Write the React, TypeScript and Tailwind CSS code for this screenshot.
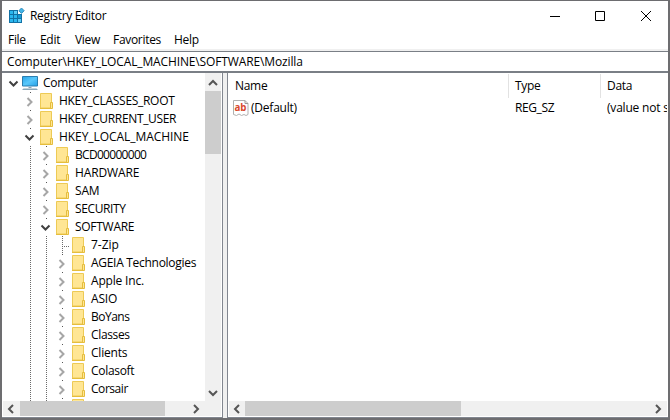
import { useState } from 'react';
import clsx from 'clsx';

type TreeNode = {
  name: string;
  level: number;
  state: 'open' | 'closed' | 'leaf';
  track: string;
};

const NODES: TreeNode[] = [
  { name: 'Computer', level: 0, state: 'open', track: 'tracking-[-0.3px]' },
  { name: 'HKEY_CLASSES_ROOT', level: 1, state: 'closed', track: 'tracking-[-0.3px]' },
  { name: 'HKEY_CURRENT_USER', level: 1, state: 'closed', track: 'tracking-[-0.34px]' },
  { name: 'HKEY_LOCAL_MACHINE', level: 1, state: 'open', track: 'tracking-[-0.06px]' },
  { name: 'BCD00000000', level: 2, state: 'closed', track: 'tracking-[-0.7px]' },
  { name: 'HARDWARE', level: 2, state: 'closed', track: 'tracking-[-0.14px]' },
  { name: 'SAM', level: 2, state: 'closed', track: 'tracking-[-0.2px]' },
  { name: 'SECURITY', level: 2, state: 'closed', track: 'tracking-[-0.37px]' },
  { name: 'SOFTWARE', level: 2, state: 'open', track: 'tracking-[-0.28px]' },
  { name: '7-Zip', level: 3, state: 'leaf', track: 'tracking-[0px]' },
  { name: 'AGEIA Technologies', level: 3, state: 'closed', track: 'tracking-[-0.29px]' },
  { name: 'Apple Inc.', level: 3, state: 'closed', track: 'tracking-[-0.18px]' },
  { name: 'ASIO', level: 3, state: 'closed', track: 'tracking-[-0.2px]' },
  { name: 'BoYans', level: 3, state: 'closed', track: 'tracking-[-0.5px]' },
  { name: 'Classes', level: 3, state: 'closed', track: 'tracking-[-0.35px]' },
  { name: 'Clients', level: 3, state: 'closed', track: 'tracking-[-0.2px]' },
  { name: 'Colasoft', level: 3, state: 'closed', track: 'tracking-[-0.3px]' },
  { name: 'Corsair', level: 3, state: 'closed', track: 'tracking-[-0.45px]' },
  { name: '', level: 3, state: 'closed', track: '' },
];

const MENU = [
  { label: 'File', width: 'w-8' },
  { label: 'Edit', width: 'w-[35px]' },
  { label: 'View', width: 'w-[38px]' },
  { label: 'Favorites', width: 'w-[61px]' },
  { label: 'Help', width: 'w-8' },
];

const ARROWS = {
  up: 'M4 10l4-4 4 4',
  down: 'M4 6l4 4 4-4',
  left: 'M10 4l-4 4 4 4',
  right: 'M6 4l4 4-4 4',
};

function ScrollArrow({ dir }: { dir: keyof typeof ARROWS }) {
  return (
    <svg width="16" height="16" viewBox="0 0 16 16" className="shrink-0" fill="none" stroke="#555" strokeWidth="2">
      <path d={ARROWS[dir]} />
    </svg>
  );
}

function Guide() {
  return (
    <svg width="16" height="18" className="shrink-0" shapeRendering="crispEdges">
      <path d="M8.5 0v18" stroke="#6b6b6b" strokeDasharray="1 1" />
    </svg>
  );
}

function Expander({ state, level, onClick }: { state: TreeNode['state']; level: number; onClick: () => void }) {
  return (
    <svg width="16" height="18" className="shrink-0" fill="none" onClick={onClick}>
      {state === 'leaf' ? (
        <path d="M8.5 0v18M8 10.5h8" stroke="#6b6b6b" strokeDasharray="1 1" shapeRendering="crispEdges" />
      ) : (
        level > 0 && <path d="M8 0h1v1h-1z" fill="#555" />
      )}
      {state === 'open' && <path d="M3.5 7.5l4 4 4-4" stroke="#404040" strokeWidth="2" />}
      {state === 'closed' && <path d="M5.5 6l4 4-4 4" stroke="#a6a6a6" strokeWidth="2" />}
    </svg>
  );
}

function FolderIcon() {
  return (
    <svg width="13" height="16" viewBox="0 0 13 16" className="shrink-0">
      <path d="M.5.5h11v14.5H.5z" fill="#ffe694" stroke="#edca55" />
      <path d="M10.5 9.5h2v6h-2z" fill="#ffe694" stroke="#e5bd3d" />
      <path d="M0 15.5h11" stroke="#e5bd3d" />
    </svg>
  );
}

function ComputerIcon() {
  return (
    <svg width="17" height="16" viewBox="0 0 17 16" className="shrink-0">
      <defs>
        <linearGradient id="screen" x1="0" y1="0" x2="1" y2="1">
          <stop offset="0" stopColor="#27a3e8" />
          <stop offset=".5" stopColor="#59c8fb" />
          <stop offset="1" stopColor="#25a0e6" />
        </linearGradient>
      </defs>
      <path d="M.5 1.5h15v9.5H.5z" fill="url(#screen)" stroke="#2b7eb0" />
      <path d="M6.5 12h3v1h-3z" fill="#8ca4b2" />
      <path d="M1.5 13.5h13l1.500 1.500H0z" fill="#8ba7b8" />
    </svg>
  );
}

function RegeditIcon() {
  return (
    <svg width="16" height="16" viewBox="0 0 16 16" className="shrink-0">
      <path d="M0 2h9v4h4v9H0z" fill="#1271a5" />
      <path d="M1 3h3v3H1zM5 7h3v3H5zM1 7h3v3H1zM1 11h3v3H1zM5 11h3v3H5z" fill="#2ab7ef" />
      <path d="M5 3h3v3H5zM9 11h3v3H9z" fill="#5ccdf7" />
      <path d="M9 7h3v3H9z" fill="#1798d2" />
      <path d="M12.500 0l2.700 2.700-2.700 2.700L9.800 2.700z" fill="#42b5e8" stroke="#1978ac" strokeWidth=".8" />
    </svg>
  );
}

function StringValueIcon() {
  return (
    <svg width="16" height="16" viewBox="0 0 16 16" className="shrink-0">
      <path d="M.5.5h11.500l3 3v11l-2 1-2-1-2.500 1-2.500-1.500-2.500 1.500-3-1z" fill="#fff" stroke="#b0b0b0" />
      <path d="M12 .5v3h3" fill="none" stroke="#999" />
      <text x="1.500" y="11" fontFamily="Open Sans, sans-serif" fontSize="11" fontWeight="700" letterSpacing="0" fill="#d9472b" textLength="12" lengthAdjust="spacingAndGlyphs">
        ab
      </text>
    </svg>
  );
}

function TreeRow({ node }: { node: TreeNode }) {
  const [open, setOpen] = useState(node.state === 'open');
  const state = node.state === 'leaf' ? 'leaf' : open ? 'open' : 'closed';

  return (
    <div className="flex h-[18px] shrink-0 items-center whitespace-nowrap pl-1">
      {node.level > 0 && <div className="w-4 shrink-0" />}
      {node.level > 1 && <Guide />}
      {node.level > 2 && <Guide />}
      <Expander state={state} level={node.level} onClick={() => setOpen(o => !o)} />
      {node.level === 0 ? (
        <ComputerIcon />
      ) : (
        <div className="ml-[2px] flex w-[17px]">
          <FolderIcon />
        </div>
      )}
      <span className={clsx('leading-[18px]', node.level === 0 ? 'ml-1' : 'ml-[2px]', node.track)}>{node.name}</span>
    </div>
  );
}

export default function App() {
  return (
    <div className="flex h-[420px] w-[670px] flex-col overflow-hidden border-x-2 border-t border-b-2 border-[#6d6d70] bg-white font-['Open_Sans','Noto_Sans',sans-serif] text-[12px] leading-[18px] tracking-[-0.3px] text-black">
      {/* Title bar */}
      <div className="flex h-[29px] shrink-0 items-center pl-[7px]">
        <RegeditIcon />
        <span className="ml-[5px] tracking-[-0.33px]">Registry Editor</span>
        <div className="ml-auto mr-[17px] flex items-center">
          <svg width="10" height="10"><path d="M0 5.500h10" stroke="#000" /></svg>
          <svg width="10" height="10" className="ml-[35px]"><path d="M.5.5h9v9h-9z" fill="none" stroke="#000" /></svg>
          <svg width="10" height="10" className="ml-[36px]"><path d="M0 0l10 10M10 0L0 10" stroke="#000" /></svg>
        </div>
      </div>

      {/* Menu */}
      <div className="flex h-[19px] shrink-0 items-center pt-px pl-[6px]">
        {MENU.map(item => <span key={item.label} className={item.width}>{item.label}</span>)}
      </div>

      {/* Address */}
      <div className="h-[24px] shrink-0 border-t-2 border-[#f0f0f0]">
        <div className="flex h-[22px] items-center border-t border-b-2 border-[#7a7f86] pl-[5px]">
          <span className="tracking-[-0.13px]">Computer\HKEY_LOCAL_MACHINE\SOFTWARE\Mozilla</span>
        </div>
      </div>

      {/* Panes */}
      <div className="flex h-[345px] shrink-0 bg-[#f0f0f0]">
        <div className="flex w-[221px] shrink-0 flex-col border-r border-b border-[#828790] bg-white pr-px pb-px">
          <div className="flex min-h-0 flex-1">
            <div className="flex h-[328px] w-[203px] flex-col overflow-hidden pt-px">
              {NODES.map((node, i) => <TreeRow key={i} node={node} />)}
            </div>
            <div className="flex w-4 flex-col justify-between bg-[#f0f0f0] pt-[2px]">
              <div>
                <ScrollArrow dir="up" />
                <div className="h-[63px] bg-[#cdcdcd]" />
              </div>
              <ScrollArrow dir="down" />
            </div>
          </div>
          <div className="ml-px flex h-[15px] shrink-0 bg-[#f0f0f0]">
            <ScrollArrow dir="left" />
            <div className="ml-px h-[15px] w-[145px] bg-[#cdcdcd]" />
            <div className="ml-[23px]"><ScrollArrow dir="right" /></div>
          </div>
        </div>

        <div className="ml-1 flex flex-1 flex-col border-b border-l border-[#828790] bg-white pb-px pl-px">
          <div className="flex h-[26px] pt-px">
            <div className="flex h-6 w-[280px] items-center border-r border-[#e2e2e2] pl-[6px]">Name</div>
            <div className="flex h-6 w-[92px] items-center border-r border-[#e2e2e2] pl-[6px]">Type</div>
            <div className="flex h-6 items-center pl-[6px]">Data</div>
          </div>
          <div className="flex h-[18px] items-center overflow-hidden whitespace-nowrap">
            <div className="flex w-[286px] shrink-0 items-center pl-1">
              <StringValueIcon />
              <span className="ml-[2px] tracking-[-0.22px]">(Default)</span>
            </div>
            <div className="w-[92px] shrink-0 tracking-[-0.4px]">REG_SZ</div>
            <div className="w-[60px] overflow-hidden tracking-[-0.2px]">(value not s</div>
          </div>
          <div className="mt-auto mr-px flex h-[15px] bg-[#f0f0f0]">
            <ScrollArrow dir="left" />
            <div className="h-[15px] w-[216px] bg-[#cdcdcd]" />
            <div className="ml-auto mr-px"><ScrollArrow dir="right" /></div>
          </div>
        </div>
      </div>
    </div>
  );
}
